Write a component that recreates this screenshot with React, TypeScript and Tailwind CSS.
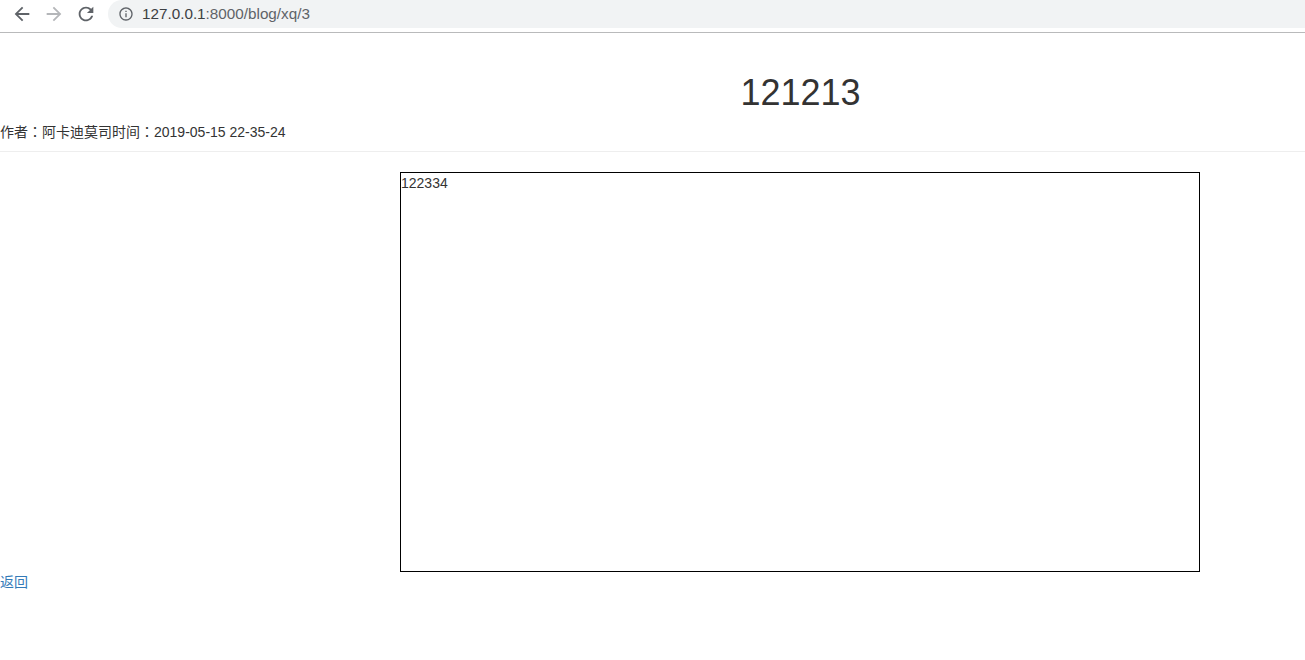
const font = "font-['Liberation_Sans','Noto_Sans_CJK_SC',sans-serif]";
const colon = "font-['Noto_Sans_CJK_TC',sans-serif]";

function BrowserBar() {
  return (
    <div className="h-[33px] flex items-start border-b border-[#b9babb] bg-white">
      <div className="flex items-center pl-[11px] gap-[10px] h-[28px]">
        <svg viewBox="0 0 24 24" className="w-[22px] h-[22px] fill-[#5f6368]">
          <path d="M20 11H7.83l5.59-5.59L12 4l-8 8 8 8 1.41-1.41L7.83 13H20v-2z" />
        </svg>
        <svg viewBox="0 0 24 24" className="w-[22px] h-[22px] fill-[#b4b6b9]">
          <path d="M4 11h12.17l-5.59-5.59L12 4l8 8-8 8-1.41-1.41L16.17 13H4v-2z" />
        </svg>
        <svg viewBox="0 0 24 24" className="w-[22px] h-[22px] fill-[#5f6368]">
          <path d="M17.65 6.35C16.2 4.9 14.21 4 12 4c-4.42 0-7.99 3.58-7.99 8s3.57 8 7.99 8c3.73 0 6.84-2.55 7.73-6h-2.08c-.82 2.33-3.04 4-5.65 4-3.31 0-6-2.69-6-6s2.69-6 6-6c1.66 0 3.14.69 4.22 1.78L13 11h7V4l-2.35 2.35z" />
        </svg>
      </div>
      <div className="ml-[11px] flex-1 h-[28px] flex items-center bg-[#f1f3f4] rounded-l-[14px] pl-[10px]">
        <svg viewBox="0 0 24 24" className="w-[16px] h-[16px] fill-[#5f6368]">
          <path d="M11 7h2v2h-2zm0 4h2v6h-2zm1-9C6.48 2 2 6.48 2 12s4.48 10 10 10 10-4.48 10-10S17.52 2 12 2zm0 18c-4.41 0-8-3.59-8-8s3.59-8 8-8 8 3.59 8 8-3.59 8-8 8z" />
        </svg>
        <span className="ml-[8px] text-[15.25px] text-[#5f6368]">
          <span className="text-[#3c4043]">127.0.0.1</span>:8000/blog/xq/3
        </span>
      </div>
    </div>
  );
}

export default function App() {
  return (
    <div className={`${font} h-[660px] bg-white text-[14px] leading-[20px] text-[#333]`}>
      <BrowserBar />
      <div className="pt-[40px]">
        <div className="flex justify-center pl-[296px]">
          <h1 className="text-[36px] leading-[40px] font-normal">121213</h1>
        </div>
        <p className="mt-[8px] h-[21px]">
          作者<span className={colon}>{"\uFF1A"}</span>阿卡迪莫司时间<span className={colon}>{"\uFF1A"}</span>2019-05-15 22-35-24
        </p>
      </div>
      <hr className="mt-[9px] border-t border-[#eee]" />
      <div className="mt-[20px] ml-[400px] w-[800px] h-[400px] border border-black">122334</div>
      <a className="block text-[#337ab7]">返回</a>
    </div>
  );
}
